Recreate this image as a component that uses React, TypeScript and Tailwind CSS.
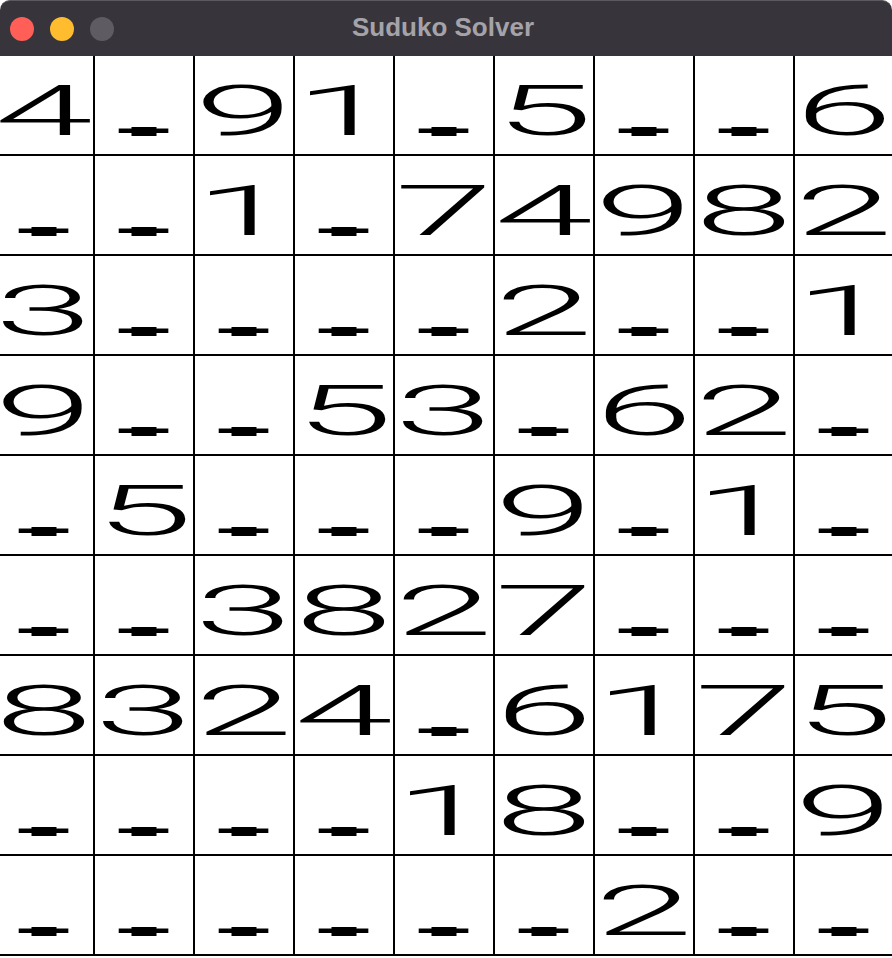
import React from "react";

const rows: string[] = [
  "4_91_5__6",
  "__1_74982",
  "3____2__1",
  "9__53_62_",
  "_5___9_1_",
  "__3827___",
  "8324_6175",
  "____18__9",
  "______2__",
];

function Cell({ ch }: { ch: string }) {
  return (
    <div className="relative flex h-[100px] w-[100px] justify-center border-b-2 border-r-2 border-black">
      {ch === "_" ? (
        <span className="relative mt-[19px] inline-block h-[71px] font-['Liberation_Sans',Arial,sans-serif] text-[71px] leading-none text-black">
          <span className="inline-block -translate-y-[16px] scale-x-[1.2]">_</span>
          <span className="absolute left-1/2 top-[52px] h-[9px] w-[25px] -translate-x-1/2 bg-black" />
        </span>
      ) : (
        <span className="mt-[19px] inline-block h-[71px] scale-x-[2.5] font-['Roboto',sans-serif] text-[71px] font-light leading-none text-black">
          {ch}
        </span>
      )}
    </div>
  );
}

export default function App() {
  return (
    <div className="h-[958px] w-[892px] overflow-hidden bg-white font-['Liberation_Sans',Arial,sans-serif]">
      <div className="relative flex h-[56px] items-center rounded-t-[10px] border-t border-[#5c5a60] bg-[#37353b]">
        <div className="flex items-center gap-[16px] pl-[10px]">
          <span className="h-[24px] w-[24px] rounded-full bg-[#ff5f57]" />
          <span className="h-[24px] w-[24px] rounded-full bg-[#febc2e]" />
          <span className="h-[24px] w-[24px] rounded-full bg-[#5e5c62]" />
        </div>
        <div className="absolute inset-0 flex items-center justify-center pb-[2px] pr-[6px] text-[26px] font-bold text-[#a5a3a9]">
          Suduko Solver
        </div>
      </div>
      <div className="ml-[-5px] grid w-[900px] grid-cols-[repeat(9,100px)]">
        {rows.map((r, i) =>
          r.split("").map((ch, j) => <Cell key={`${i}-${j}`} ch={ch} />)
        )}
      </div>
    </div>
  );
}
